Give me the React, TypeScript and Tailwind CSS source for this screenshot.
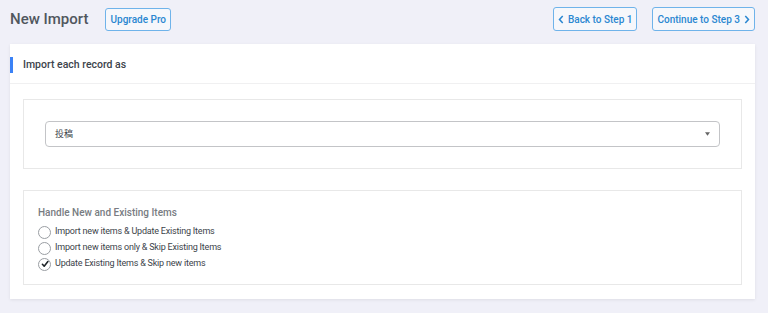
import React from "react";

function Radio({ checked, label }: { checked?: boolean; label: string }) {
  return (
    <label className="flex items-center h-[16px]">
      <span className="w-[13px] h-[13px] rounded-full border border-[#9a9ea3] bg-white flex items-center justify-center shrink-0">
        {checked && (
          <svg width="8" height="8" viewBox="0 0 10 10">
            <path d="M1.8 5.4 L4 7.8 L8.6 2" fill="none" stroke="#1d2327" strokeWidth="2" strokeLinecap="round" strokeLinejoin="round" />
          </svg>
        )}
      </span>
      <span className="ml-[4px] text-[9px] tracking-[-0.2px] text-[#3c434a]">{label}</span>
    </label>
  );
}

export default function App() {
  return (
    <div className="w-[768px] h-[313px] bg-[#f0f0f8] overflow-hidden" style={{ fontFamily: "Roboto, 'Noto Sans CJK SC', sans-serif" }}>
      <div className="flex items-center h-[37px] pl-[10px] pr-[13px] pt-[1px]">
        <h1 className="text-[15px] font-medium text-[#50575e]">New Import</h1>
        <button className="ml-[17px] h-[23px] px-[4px] rounded-[3px] border border-[#6fb3ea] bg-[#f6f7fb] text-[10px] font-medium text-[#2b87d1]">Upgrade Pro</button>
        <div className="ml-auto flex gap-[15px]">
          <button className="h-[24px] px-[4px] rounded-[3px] border border-[#6fb3ea] bg-[#f6f7fb] text-[10px] font-medium text-[#2b87d1] flex items-center gap-[4px]">
            <svg width="6" height="9" viewBox="0 0 7 10"><path d="M5.5 1 L1.8 5 L5.5 9" fill="none" stroke="#2b87d1" strokeWidth="1.8" /></svg>
            Back to Step 1
          </button>
          <button className="h-[24px] px-[4px] rounded-[3px] border border-[#6fb3ea] bg-[#f6f7fb] text-[10px] font-medium text-[#2b87d1] flex items-center gap-[4px]">
            Continue to Step 3
            <svg width="6" height="9" viewBox="0 0 7 10"><path d="M1.5 1 L5.2 5 L1.5 9" fill="none" stroke="#2b87d1" strokeWidth="1.8" /></svg>
          </button>
        </div>
      </div>
      <div className="mt-[7px] ml-[10px] mr-[13px] bg-white shadow-[0_1px_3px_rgba(0,0,0,0.08)]">
        <div className="h-[40px] flex items-center border-b border-[#f0f0f1] pt-[3px]">
          <div className="w-[3px] h-[16px] bg-[#3b82f6]" />
          <span className="ml-[10px] text-[10.5px] font-medium text-[#3c434a]">Import each record as</span>
        </div>
        <div className="px-[13px] pt-[15px] pb-[14px] flex flex-col gap-[21px]">
          <div className="h-[70px] border border-[#e8e8e8] px-[21px] flex items-center">
            <div className="w-full h-[26px] rounded-[4px] border border-[#c3c4c7] flex items-center pl-[9px] pr-[9px]">
              <span className="text-[9px] text-[#3c434a]" style={{ fontFamily: "'Noto Sans CJK SC', sans-serif" }}>投稿</span>
              <svg className="ml-auto" width="5" height="4" viewBox="0 0 6 4"><path d="M0 0 L6 0 L3 4 Z" fill="#666" /></svg>
            </div>
          </div>
          <div className="h-[95px] border border-[#e8e8e8] pl-[14px] pt-[14px]">
            <div className="text-[10px] font-medium text-[#787c82] mb-[4px]">Handle New and Existing Items</div>
            <Radio label="Import new items & Update Existing Items" />
            <Radio label="Import new items only & Skip Existing Items" />
            <Radio checked label="Update Existing Items & Skip new items" />
          </div>
        </div>
      </div>
    </div>
  );
}
